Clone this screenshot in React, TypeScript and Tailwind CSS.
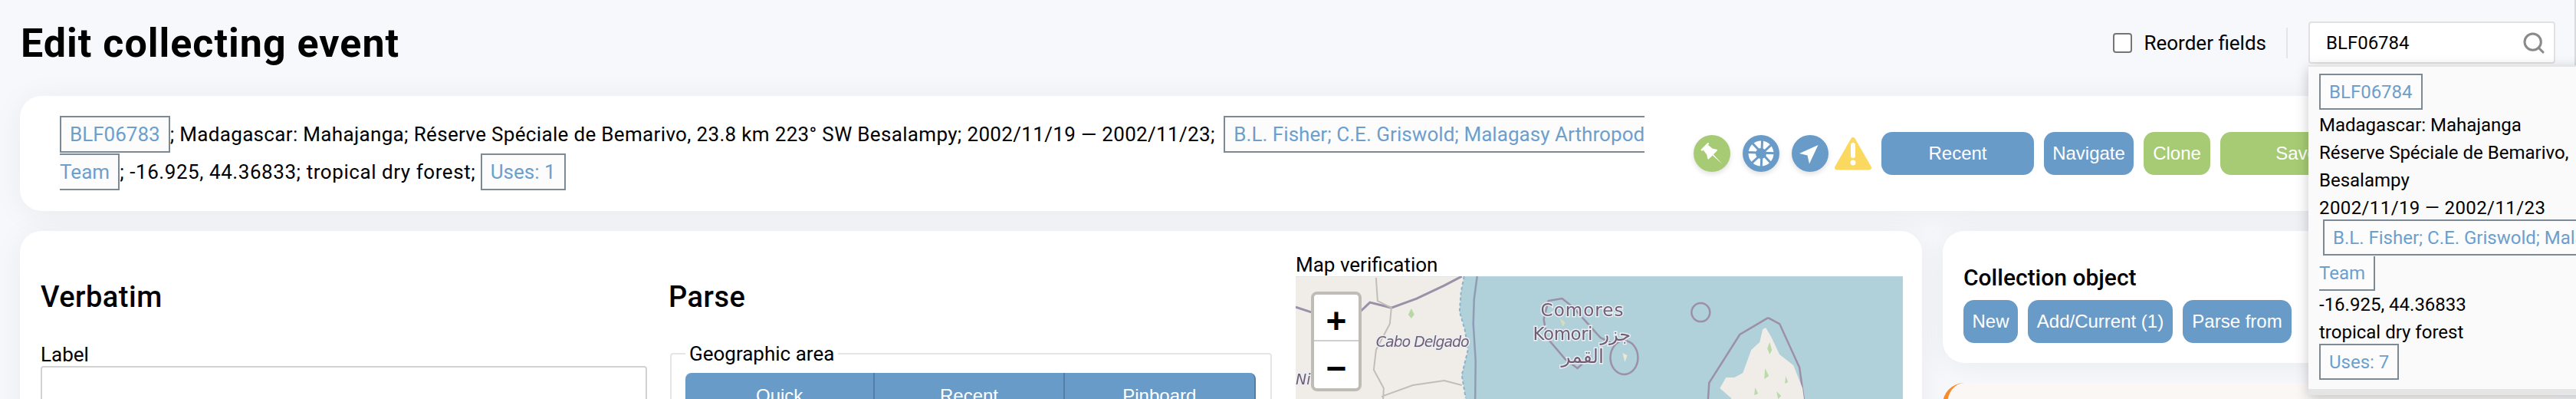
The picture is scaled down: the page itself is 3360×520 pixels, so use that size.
import React from "react";
import { Search } from "lucide-react";

const plex = "font-['Roboto','Noto_Sans',sans-serif]";
const arial = "font-['Liberation_Sans',Arial,sans-serif]";

function Chip({ children, py = "py-[7px]", text = "" }: { children: React.ReactNode; py?: string; text?: string }) {
  return <span className={`border-2 border-[#7b8a94] bg-[#fcfcfc] px-[11px] text-[#6d9fcd] ${py} ${text}`}>{children}</span>;
}

function Btn({ children, w, green }: { children: React.ReactNode; w: string; green?: boolean }) {
  return (
    <div className={`${w} ${arial} flex h-[56px] shrink-0 items-center justify-center rounded-[14px] text-[24px] text-white ${green ? "bg-[#a6cb74]" : "bg-[#699bc9]"}`}>
      {children}
    </div>
  );
}

function Circle({ children, green }: { children: React.ReactNode; green?: boolean }) {
  return (
    <div className={`flex h-[48px] w-[48px] shrink-0 items-center justify-center rounded-full shadow-[0_3px_6px_rgba(0,0,0,0.12)] ${green ? "bg-[#a6cb74]" : "bg-[#699bc9]"}`}>
      {children}
    </div>
  );
}

function PinIcon() {
  return (
    <svg viewBox="0 0 48 48" className="h-[48px] w-[48px]">
      <g transform="translate(22.5 23) rotate(-45)" fill="#fff">
        <path d="M-6.7 -12H6.7V-9.5H4.5L5.5 -2L8.5 2.5V4H0.8L0 21L-0.8 4H-8.5V2.5L-5.5 -2L-4.5 -9.5H-6.7Z" />
      </g>
    </svg>
  );
}

function WheelIcon() {
  const spokes = [0, 45, 90, 135];
  return (
    <svg viewBox="0 0 48 48" className="h-[48px] w-[48px]">
      <circle cx="24" cy="24" r="16.5" fill="#fff" />
      {spokes.map((a) => (
        <rect key={a} x="6" y="21.6" width="36" height="3" fill="#699bc9" transform={`rotate(${a + 2} 24 24)`} />
      ))}
      <circle cx="24" cy="24" r="7" fill="#699bc9" />
    </svg>
  );
}

function NavIcon() {
  return (
    <svg viewBox="0 0 48 48" className="h-[48px] w-[48px]">
      <path d="M34.5 13L23 37.5L20.5 26.5L10 24Z" fill="#fff" />
    </svg>
  );
}

function WarnIcon() {
  return (
    <svg viewBox="0 0 48 44" className="h-[44px] w-[48px] shrink-0">
      <path d="M24 4L45 40.5H3Z" fill="#fbd961" stroke="#fbd961" strokeWidth="6" strokeLinejoin="round" />
      <rect x="21" y="8" width="6" height="20" rx="3" fill="#fff" />
      <circle cx="24" cy="34" r="3.4" fill="#fff" />
    </svg>
  );
}

function MapArt() {
  const line = "#9c90a8";
  return (
    <svg viewBox="0 0 793 200" className="h-[200px] w-[792px] blur-[0.5px]">
      <rect width="793" height="200" fill="#b0d0da" />
      <path d="M0 0H220L216 20L214 46L221 70L225 96L217 129L222 159L220 200H0Z" fill="#f0ede8" />
      <path d="M237 0L233 30L232 62L235 110L234 200" fill="none" stroke="#8f9cb6" strokeWidth="2.5" />
      <path d="M220 0L216 20L214 46L221 70L225 96L217 129L222 159" fill="none" stroke="#8fb2c8" strokeWidth="2" strokeDasharray="4 3" />
      <path d="M0 40L21 47L51 51L79 51L97 34L125 41L158 29L194 12L217 0" fill="none" stroke={line} strokeWidth="3" />
      <path d="M105 2L107 32L125 41L123 62L105 96L102 122L115 146L112 200M112 157L153 142L194 136L217 142" fill="none" stroke="#c3bdb9" strokeWidth="2" />
      <path d="M151 42L155 50L151 55L147 50Z" fill="#b6d8a4" />
      <path d="M324 56L330 32L348 29L362 40L398 80L414 88" fill="none" stroke={line} strokeWidth="2.5" />
      <path d="M324 56L328 80L352 108L368 120L386 104" fill="none" stroke={line} strokeWidth="2.5" />
      <ellipse cx="429" cy="106" rx="18" ry="22" fill="none" stroke={line} strokeWidth="2.5" />
      <circle cx="529" cy="47" r="12" fill="none" stroke={line} strokeWidth="2.5" />
      <path d="M427 100L433 103L430 112Z" fill="#efe7cf" />
      <path d="M345 55L352 60L349 66Z" fill="#d7dfb8" />
      <path d="M617 54L580 76L540 139L536 200M617 54L632 62L658 119L669 200" fill="none" stroke={line} strokeWidth="2.5" />
      <path d="M614 67L621 79L632 102L650 116L662 146L669 200H569L569 159L554 146L562 132L573 132L584 126L595 96L606 86L610 69Z" fill="#f0ede8" />
      <path d="M619 86l3 10-3 6-3-8zM613 120l5 10-6 4zM640 130l3 8-4 2zM600 145l4 8-5 2zM628 150l6 6-4 4z" fill="#b9dba8" />
      <g fontFamily="'DejaVu Sans',sans-serif" fill="#705d77" stroke="#e9eef0" strokeWidth="3" paintOrder="stroke">
        <text x="105" y="92" fontSize="19" fontStyle="italic" textLength="122">Cabo Delgado</text>
        <text x="0" y="141" fontSize="19" fontStyle="italic">Nic</text>
        <text x="320" y="52" fontSize="23" textLength="108">Comores</text>
        <text x="310" y="83" fontSize="23" textLength="78">Komori</text>
        <text x="398" y="84" fontSize="24">جزر</text>
        <text x="347" y="113" fontSize="25">القمر</text>
      </g>
    </svg>
  );
}

export default function App() {
  return (
    <div className={`${plex} relative h-[520px] w-[3360px] overflow-hidden bg-[#f7f8fc] text-[26px] text-black`}>
      <header className="flex h-[125px] items-start justify-between pr-[27px] pl-[27px]">
        <h1 className="pt-[28px] text-[52px] leading-[58px] font-bold tracking-[1px]">Edit collecting event</h1>
        <div className="flex items-center pt-[28px]">
          <label className="flex items-center gap-[15px] text-[26px] leading-[30px]">
            <input type="checkbox" className="h-[26px] w-[25px] appearance-none rounded-[4px] border-2 border-[#767676] bg-white" />
            <span>Reorder fields</span>
          </label>
          <div className="mr-[27px] ml-[26px] h-[40px] w-[2px] bg-[#e3e4e8]" />
          <div className="flex h-[55px] w-[322px] items-center justify-between rounded-[4px] border-2 border-[#e1e1e1] bg-white pr-[10px] pl-[21px] text-[24px]">
            <span>BLF06784</span>
            <Search className="h-[32px] w-[32px] text-[#8a8a8a]" strokeWidth={2.3} />
          </div>
        </div>
      </header>
      <div className="absolute top-0 right-0 h-[85px] w-[2px] bg-[#d8dade]" />

      <section className="mx-[26px] flex h-[150px] items-center rounded-[28px] bg-white pl-[52px] shadow-[0_4px_40px_rgba(0,0,0,0.06)]">
        <div className="w-[2082px] shrink-0 text-[26px] leading-[49px]">
          <Chip>BLF06783</Chip>
          <span className="tracking-[0.33px]">; Madagascar: Mahajanga; Réserve Spéciale de Bemarivo, 23.8 km 223° SW Besalampy; 2002/11/19 — 2002/11/23;</span>{" "}
          <Chip text="ml-[5px] tracking-[0.05px]">B.L. Fisher; C.E. Griswold; Malagasy Arthropod<br />Team</Chip>
          <span className="tracking-[0.56px]">; -16.925, 44.36833; tropical dry forest;</span> <Chip>Uses: 1</Chip>
        </div>
        <div className="ml-[49px] flex items-center gap-[16px]">
          <Circle green><PinIcon /></Circle>
          <Circle><WheelIcon /></Circle>
          <Circle><NavIcon /></Circle>
        </div>
        <div className="ml-[8px] flex items-center gap-[13px]">
          <WarnIcon />
          <Btn w="w-[199px]">Recent</Btn>
          <Btn w="w-[117px]">Navigate</Btn>
          <Btn w="w-[87px]" green>Clone</Btn>
          <Btn w="w-[199px]" green>Save</Btn>
        </div>
      </section>

      <div className="mt-[26px] flex items-start gap-[27px] pl-[26px]">
        <section className="flex h-[300px] w-[2481px] shrink-0 items-start rounded-[28px] bg-white pl-[27px] shadow-[0_4px_40px_rgba(0,0,0,0.06)]">
          <div className="w-[791px] shrink-0 pt-[64px]">
            <h2 className="text-[38px] leading-[44px] font-medium tracking-[0.5px]">Verbatim</h2>
            <div className="mt-[38px] leading-[30px]">Label</div>
            <div className="h-[160px] rounded-[4px] border-2 border-[#d2d2d2] bg-white" />
          </div>
          <div className="ml-[30px] w-[785px] shrink-0 pt-[64px]">
            <h2 className="ml-[-2px] text-[38px] leading-[44px] font-medium tracking-[0.5px]">Parse</h2>
            <fieldset className="mt-[37px] rounded-[4px] border-2 border-[#e5e5e5] pr-[19px] pl-[18px]">
              <legend className="px-[5px] leading-[30px]">Geographic area</legend>
              <div className={`${arial} mt-[10px] grid h-[60px] grid-cols-3 overflow-hidden rounded-t-[8px] border-r-2 border-[#527ea8] bg-[#699bc9] text-[24px] text-white`}>
                <div className="flex items-center justify-center border-r-2 border-[#527ea8]">Quick</div>
                <div className="flex items-center justify-center border-r-2 border-[#527ea8]">Recent</div>
                <div className="flex items-center justify-center">Pinboard</div>
              </div>
            </fieldset>
          </div>
          <div className="ml-[31px] w-[792px] shrink-0 pt-[29px]">
            <div className="leading-[30px]">Map verification</div>
            <div className="relative h-[200px] overflow-hidden">
              <MapArt />
              <div className={`${arial} absolute top-[20px] left-[20px] flex h-[130px] w-[66px] flex-col rounded-[8px] border-[4px] border-[#bfbcb6] bg-white`}>
                <div className="flex h-[61px] items-center justify-center border-b-2 border-[#cfcfcf] pt-[8px] text-[46px] font-bold leading-none">+</div>
                <div className="flex flex-1 items-center justify-center pt-[8px] text-[46px] font-bold leading-none">−</div>
              </div>
            </div>
          </div>
        </section>

        <div className="flex w-[800px] shrink-0 flex-col gap-[26px]">
          <section className="h-[172px] rounded-[28px] bg-white px-[27px] pt-[43px] shadow-[0_4px_40px_rgba(0,0,0,0.06)]">
            <h3 className="text-[30px] leading-[36px] font-medium">Collection object</h3>
            <div className="mt-[11px] flex gap-[13px]">
              <Btn w="w-[71px]">New</Btn>
              <Btn w="w-[189px]">Add/Current (1)</Btn>
              <Btn w="w-[142px]">Parse from</Btn>
            </div>
          </section>
          <section className="h-[100px] rounded-[28px] border-l-[6px] border-[#f58d2f] bg-[#fbf7f5]" />
        </div>
      </div>

      <aside className="absolute top-[85px] left-[3011px] w-[420px] border-t-2 border-b-[8px] border-[#e5e5e5] bg-[#fafafa] pt-[9px] pb-[12px] pl-[14px] text-[24px] leading-[36px] whitespace-nowrap shadow-[0_4px_16px_rgba(0,0,0,0.22)]">
        <div className="leading-[47px]"><Chip py="py-[7.5px]">BLF06784</Chip></div>
        <div className="mt-[2px]">Madagascar: Mahajanga</div>
        <div>Réserve Spéciale de Bemarivo,</div>
        <div>Besalampy</div>
        <div className="tracking-[0.4px]">2002/11/19 — 2002/11/23</div>
        <div className="mt-[-3px] pl-[5px] leading-[46.5px]">
          <Chip py="py-[7.5px]">B.L. Fisher; C.E. Griswold; Malagasy Arthropod</Chip>
        </div>
        <div className="leading-[46.5px]"><span className="border-r-2 border-b-2 border-[#7b8a94] bg-[#fcfcfc] py-[7.5px] pr-[11px] text-[#6d9fcd]">Team</span></div>
        <div>-16.925, 44.36833</div>
        <div>tropical dry forest</div>
        <div className="mt-[-3px] leading-[47px]"><Chip py="py-[7.5px]">Uses: 7</Chip></div>
      </aside>
    </div>
  );
}
